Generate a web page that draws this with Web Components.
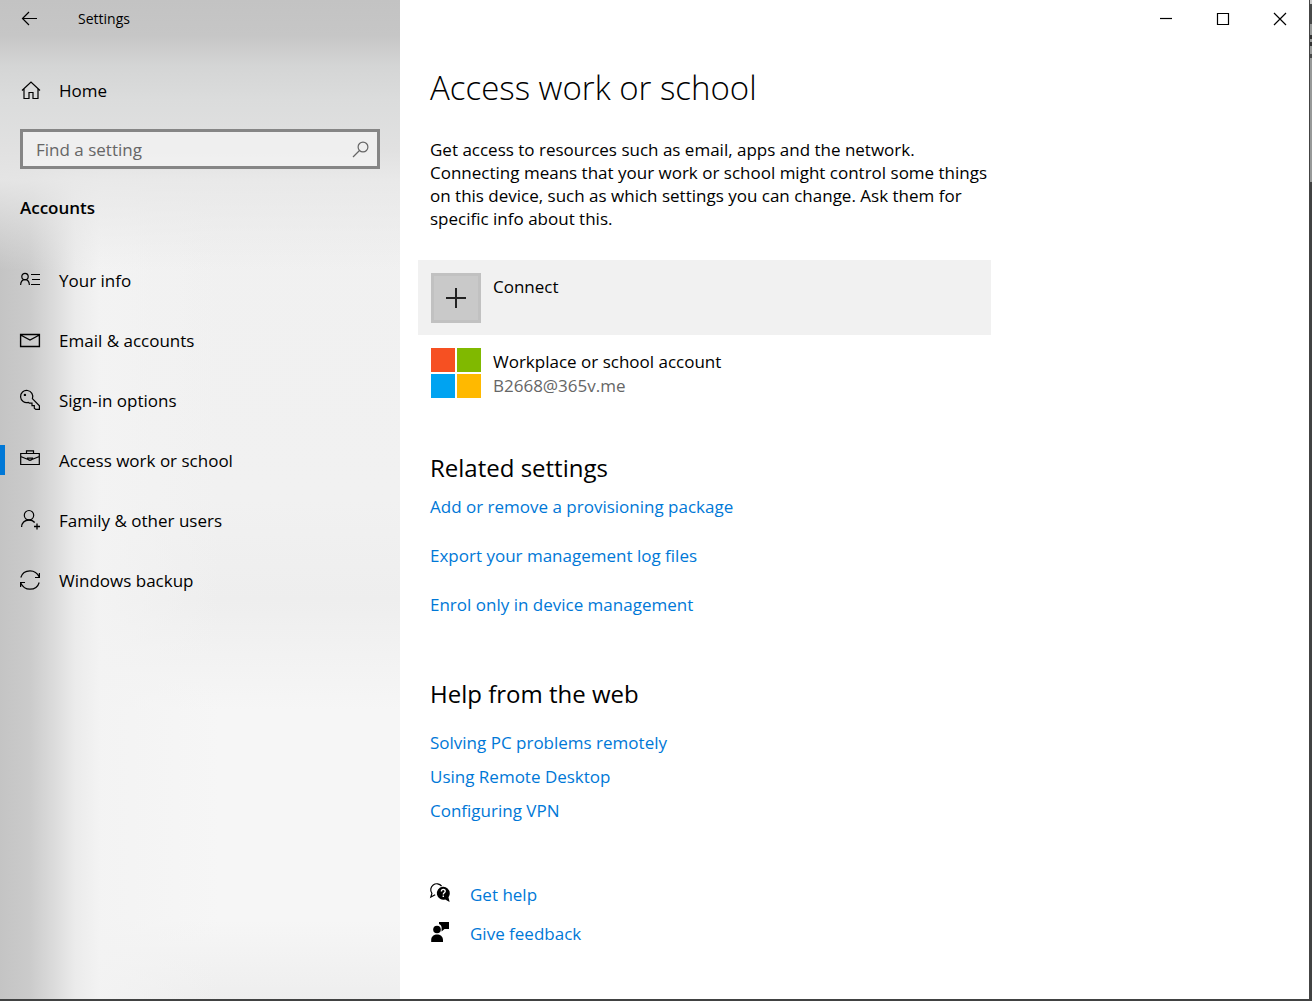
<!DOCTYPE html>
<html lang="en-GB">
<head>
<meta charset="utf-8">
<title>Settings</title>
<style>
html, body {
  height: 100%;
  margin: 0;
}

body {
  font-family: "Open Sans", "Noto Sans", sans-serif;
  font-size: 17px;
  line-height: 24px;
  color: #000;
  background: #414242;
}
</style>
</head>
<body>

<settings-window>
  <settings-sidebar slot="sidebar" heading="Accounts">
    <nav-item icon="contact">Your info</nav-item>
    <nav-item icon="mail">Email &amp; accounts</nav-item>
    <nav-item icon="key">Sign-in options</nav-item>
    <nav-item icon="briefcase" current>Access work or school</nav-item>
    <nav-item icon="add-user">Family &amp; other users</nav-item>
    <nav-item icon="sync">Windows backup</nav-item>
  </settings-sidebar>

  <settings-page heading="Access work or school">
    <span slot="intro">Get access to resources such as email, apps and the network.<br>Connecting means that your work or school might control some things on this device, such as which settings you can change. Ask them for specific info about this.</span>

    <account-row highlighted icon="plus">Connect</account-row>
    <account-row icon="logo">Workplace or school account<span slot="detail">B2668@365v.me</span></account-row>

    <link-group slot="links" heading="Related settings">
      <text-link>Add or remove a provisioning package</text-link>
      <text-link>Export your management log files</text-link>
      <text-link>Enrol only in device management</text-link>
    </link-group>

    <link-group slot="links" heading="Help from the web" compact>
      <text-link>Solving PC problems remotely</text-link>
      <text-link>Using Remote Desktop</text-link>
      <text-link>Configuring VPN</text-link>
    </link-group>

    <text-link slot="footer" icon="help">Get help</text-link>
    <text-link slot="footer" icon="feedback">Give feedback</text-link>
  </settings-page>
</settings-window>

<script>
// inner markup of every icon, drawn on a 20x20 grid
const icons = {
  back: '<path d="M17 9.5H2.5M9 3L2.5 9.5L9 16"/>',
  home: '<path d="M2 10.5L11 2L20 10.5M4 9V18.5H9V12.5H13V18.5H18V9"/>',
  search: '<circle cx="13" cy="8" r="4.9"/><path d="M9.5 11.5L3 18"/>',
  contact: '<circle cx="5" cy="6.5" r="3.2"/><path d="M.6 15C.8 11.5 2.5 9.7 5 9.7S9.2 11.5 9.4 15M11 4.5H20M12 9.5H20M11 14.5H20"/>',
  mail: '<path d="M.6 4.5H19.4V16.5H.6ZM.6 5L10 10L19.4 5" stroke-width="1.4"/>',
  key: '<path d="M12.4 8.6A6.1 6.1 0 1 0 8.3 12.4L9.5 13.2H12V15.7H14.3V18.2L15.8 19.4H19.4V15.8Z"/><circle cx="4.9" cy="4.9" r="1.2" fill="currentColor" stroke="none"/>',
  briefcase: '<path d="M.7 3.5H19.3V14.5H.7ZM6.5 3V.8H13.5V3M.6 6.5L7.5 9.2M19.4 6.5L12.5 9.2M7.5 8.2H12.5V9Q10 11.5 7.5 9Z"/>',
  'add-user': '<circle cx="9" cy="5.2" r="4.7"/><path d="M1.6 17C1.6 13 4.5 10 9 10C11.5 10 13.5 11 14.7 12.5M17 13.5V19.5M14 16.5H20" stroke-width="1.3"/>',
  sync: '<path d="M.8 7.5C2 3.5 5.5.8 10 .8C14.3.8 17.5 3.2 19.2 7M19.4 3V7.5H15M19.2 12.5C18 16.5 14.5 19.2 10 19.2C5.7 19.2 2.5 16.8.8 13M.6 17V12.5H5"/>',
  plus: '<path d="M10 0V20M0 10H20" stroke-width="2"/>',
  minimize: '<path d="M4 9.5H16"/>',
  maximize: '<path d="M4.5 4.5H15.5V15.5H4.5Z"/>',
  close: '<path d="M4 4L16 16M16 4L4 16"/>',
  help: '<path d="M5.2 10.8L.8 13L1.9 9.3A5.7 5.7 0 1 1 11.6 2.2" transform="translate(0 -1)"/><path d="M19.8 8.2A6.5 6.5 0 1 0 15.2 14.5L19.6 17L18.5 12.3A6.5 6.5 0 0 0 19.8 8.2Z" fill="currentColor" stroke="none"/><path d="M11.4 6.4C11.4 3.8 15.2 3.8 15.2 6.2C15.2 7.7 13.3 7.8 13.3 9.4M13.3 10.6V12" stroke="#fff" stroke-width="1.4"/>',
  feedback: '<g fill="currentColor" stroke="none"><circle cx="7" cy="5.5" r="3.8"/><path d="M1.2 18V16C1.2 8.7 13 8.7 13 16V18ZM9 -2H19V5H14.5L11.6 7.5V5C12 2.5 10.8.8 9 0Z"/></g>',
  logo: '<g stroke="none"><path d="M0 0H9.6V9.6H0Z" fill="#f65022"/><path d="M10.4 0H20V9.6H10.4Z" fill="#80b900"/><path d="M0 10.4H9.6V20H0Z" fill="#00a3f1"/><path d="M10.4 10.4H20V20H10.4Z" fill="#ffb900"/></g>'
};

class SettingsIcon extends HTMLElement {
  constructor() {
    super();
    this.attachShadow({ mode: 'open' });
  }

  connectedCallback() {
    this.shadowRoot.innerHTML = `
      <style>
        :host { display: block; flex: none; width: 20px; height: 20px; }
        svg { display: block; width: 100%; height: 100%; overflow: visible; }
      </style>
      <svg viewBox="0 0 20 20" fill="none" stroke="currentColor" stroke-width="1.2" aria-hidden="true">${icons[this.getAttribute('name')]}</svg>
    `;
  }
}

class SettingsWindow extends HTMLElement {
  constructor() {
    super();
    this.attachShadow({ mode: 'open' }).innerHTML = `
      <style>
        :host {
          display: flex;
          box-sizing: border-box;
          min-height: 100%;
          padding: 0 3px 2px 0;
          /* slice of the desktop visible past the window's edge */
          background:
            linear-gradient(#444 0 0) right 2px top / 1px 100% no-repeat,
            linear-gradient(#c8c8c8 4px, #484a4a 4px 24px, #989a99 24px 35px, #333 35px 39px, #989a99 39px 42px, #333 42px 46px, #989a99 46px 54px, #484a4a 54px 58px, #989a99 58px 182px, transparent 182px) right top / 2px 100% no-repeat;
        }
        main { flex: 1; min-width: 0; background: #fff; }
        header { display: flex; justify-content: flex-end; height: 38px; padding-right: 1px; }
        button {
          display: flex;
          align-items: center;
          justify-content: center;
          width: 57px;
          padding: 0;
          border: 0;
          background: none;
          color: #000;
        }
        button:hover { background: #e5e5e5; }
      </style>
      <slot name="sidebar"></slot>
      <main>
        <header>
          <button aria-label="Minimise"><settings-icon name="minimize"></settings-icon></button>
          <button aria-label="Maximise"><settings-icon name="maximize"></settings-icon></button>
          <button aria-label="Close"><settings-icon name="close"></settings-icon></button>
        </header>
        <slot></slot>
      </main>
    `;
  }
}

class SettingsSidebar extends HTMLElement {
  constructor() {
    super();
    this.attachShadow({ mode: 'open' }).innerHTML = `
      <style>
        :host {
          display: block;
          flex: none;
          width: 400px;
          background:
            linear-gradient(#c3c3c3 0, #c6c6c6 35px, #d4d5d5 65px, #dbdcdc 100px, #e1e1e1 150px, rgba(232,232,232,.9) 180px, rgba(240,240,240,0) 270px),
            linear-gradient(to right, #c4c4c4 0, #cbcbcb 30px, #dcdcdc 55px, #ebebeb 75px, rgba(243,243,243,.9) 100px, rgba(244,244,244,0) 220px),
            linear-gradient(#f0f0f0 0, #f1f1f1 500px, #eee 600px, #f6f6f6 710px, #f6f6f6 920px, #eee 100%);
        }
        header { display: flex; align-items: center; height: 38px; font-size: 14px; }
        .back { padding: 0; margin: 0 38px 0 20px; border: 0; background: none; color: #000; }
        .home {
          display: flex;
          align-items: center;
          gap: 19px;
          height: 60px;
          margin-top: 22px;
          padding: 0 20px;
          color: inherit;
          text-decoration: none;
        }
        .home span { padding-top: 2px; }
        .search {
          display: flex;
          align-items: center;
          box-sizing: border-box;
          height: 40px;
          margin: 9px 20px 0;
          padding: 0 7px 0 13px;
          border: 3px solid #868686;
          background: rgba(243,243,243,.8);
          color: #666;
        }
        input {
          flex: 1;
          min-width: 0;
          padding: 2px 0 0;
          border: 0;
          outline: 0;
          background: none;
          font: inherit;
          color: #000;
        }
        input::placeholder { color: #666; opacity: 1; }
        h2 { margin: 27px 20px 30px; font-size: 17px; line-height: 24px; font-weight: 600; }
      </style>
      <header>
        <button class="back" aria-label="Back"><settings-icon name="back"></settings-icon></button>
        <span>Settings</span>
      </header>
      <a class="home" href="#"><settings-icon name="home"></settings-icon><span>Home</span></a>
      <label class="search">
        <input type="text" placeholder="Find a setting" aria-label="Find a setting">
        <settings-icon name="search"></settings-icon>
      </label>
      <h2></h2>
      <nav><slot></slot></nav>
    `;
  }

  connectedCallback() {
    this.shadowRoot.querySelector('h2').textContent = this.getAttribute('heading');
  }
}

class NavItem extends HTMLElement {
  constructor() {
    super();
    this.attachShadow({ mode: 'open' });
  }

  connectedCallback() {
    this.shadowRoot.innerHTML = `
      <style>
        :host { display: block; }
        a {
          display: flex;
          align-items: center;
          gap: 19px;
          height: 60px;
          padding: 0 20px;
          color: inherit;
          text-decoration: none;
        }
        span { padding-top: 2px; }
        :host([current]) a {
          background: linear-gradient(#0078d7 0 0) left center / 5px 30px no-repeat;
        }
      </style>
      <a href="#"><settings-icon name="${this.getAttribute('icon')}"></settings-icon><span><slot></slot></span></a>
    `;
  }
}

class SettingsPage extends HTMLElement {
  constructor() {
    super();
    this.attachShadow({ mode: 'open' }).innerHTML = `
      <style>
        :host { display: block; max-width: 573px; padding: 26px 18px 40px; }
        h1 { margin: 0 12px; font-size: 33px; line-height: 48px; font-weight: 300; }
        p { margin: 26px 0 30px 12px; line-height: 23px; }
        footer { display: flex; flex-direction: column; gap: 15px; margin: 60px 12px 0; }
      </style>
      <h1></h1>
      <p><slot name="intro"></slot></p>
      <slot></slot>
      <slot name="links"></slot>
      <footer><slot name="footer"></slot></footer>
    `;
  }

  connectedCallback() {
    this.shadowRoot.querySelector('h1').textContent = this.getAttribute('heading');
  }
}

class AccountRow extends HTMLElement {
  constructor() {
    super();
    this.attachShadow({ mode: 'open' });
  }

  connectedCallback() {
    this.shadowRoot.innerHTML = `
      <style>
        :host { display: block; }
        button {
          display: flex;
          gap: 12px;
          width: 100%;
          padding: 13px 13px 12px;
          border: 0;
          background: none;
          color: inherit;
          font: inherit;
          text-align: left;
        }
        :host([highlighted]) button { background: #f1f1f1; }
        .tile { display: flex; flex: none; width: 50px; height: 50px; }
        .tile settings-icon { width: 50px; height: 50px; }
        :host([highlighted]) .tile {
          box-sizing: border-box;
          align-items: center;
          justify-content: center;
          border: 3px solid #c1c1c1;
          background: #c9c9c9;
        }
        :host([highlighted]) settings-icon { width: 20px; height: 20px; color: #222; }
        .detail { display: block; color: #666; }
        .text { padding-top: 2px; }
      </style>
      <button>
        <span class="tile"><settings-icon name="${this.getAttribute('icon')}"></settings-icon></span>
        <span class="text"><slot></slot><span class="detail"><slot name="detail"></slot></span></span>
      </button>
    `;
  }
}

class LinkGroup extends HTMLElement {
  constructor() {
    super();
    this.attachShadow({ mode: 'open' }).innerHTML = `
      <style>
        :host { display: block; margin: 42px 12px 0; }
        h2 { margin: 0 0 11px; font-size: 24px; line-height: 32px; font-weight: 400; }
        div { display: flex; flex-direction: column; gap: 25px; }
        :host([compact]) { margin-top: 61px; }
        :host([compact]) h2 { margin-bottom: 21px; }
        :host([compact]) div { gap: 10px; }
      </style>
      <h2></h2>
      <div><slot></slot></div>
    `;
  }

  connectedCallback() {
    this.shadowRoot.querySelector('h2').textContent = this.getAttribute('heading');
  }
}

class TextLink extends HTMLElement {
  constructor() {
    super();
    this.attachShadow({ mode: 'open' });
  }

  connectedCallback() {
    var icon = this.getAttribute('icon');
    this.shadowRoot.innerHTML = `
      <style>
        :host { display: flex; align-items: center; gap: 20px; }
        a { color: #0078d7; text-decoration: none; }
        a:hover { color: #666; }
      </style>
      ${icon ? `<settings-icon name="${icon}"></settings-icon>` : ''}
      <a href="#"><slot></slot></a>
    `;
  }
}

window.customElements.define('settings-icon', SettingsIcon);
window.customElements.define('settings-window', SettingsWindow);
window.customElements.define('settings-sidebar', SettingsSidebar);
window.customElements.define('nav-item', NavItem);
window.customElements.define('settings-page', SettingsPage);
window.customElements.define('account-row', AccountRow);
window.customElements.define('link-group', LinkGroup);
window.customElements.define('text-link', TextLink);
</script>
</body>
</html>
